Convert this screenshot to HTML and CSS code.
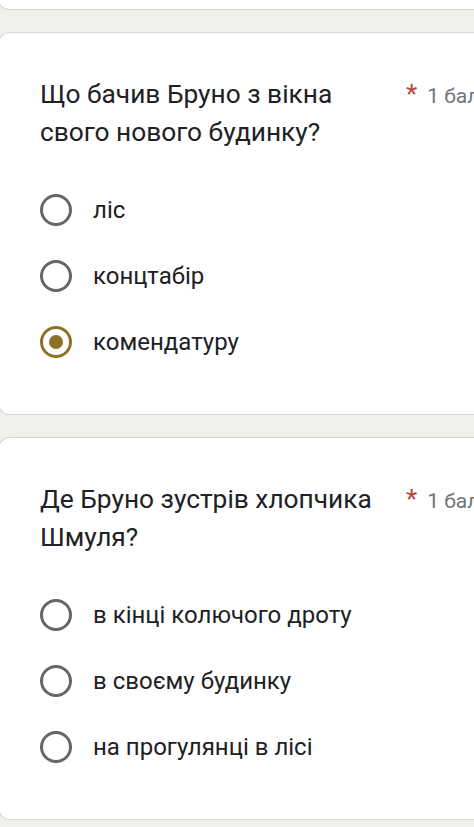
FILE: index.html
```html
<!DOCTYPE html>
<html lang="uk">
<head>
<meta charset="utf-8">
<link rel="stylesheet" href="styles.css">
</head>
<body>
<div class="page">
  <div class="card card-stub"></div>

  <div class="card">
    <div class="q-head">
      <div class="q-title">Що бачив Бруно з вікна свого нового будинку?</div>
      <div class="q-meta"><span class="req">*</span><span class="points">1 бал</span></div>
    </div>
    <div class="options">
      <label class="option"><span class="radio"></span><span class="opt-text">ліс</span></label>
      <label class="option"><span class="radio"></span><span class="opt-text">концтабір</span></label>
      <label class="option"><span class="radio checked"></span><span class="opt-text">комендатуру</span></label>
    </div>
  </div>

  <div class="card">
    <div class="q-head">
      <div class="q-title">Де Бруно зустрів хлопчика Шмуля?</div>
      <div class="q-meta"><span class="req">*</span><span class="points">1 бал</span></div>
    </div>
    <div class="options">
      <label class="option"><span class="radio"></span><span class="opt-text">в кінці колючого дроту</span></label>
      <label class="option"><span class="radio"></span><span class="opt-text">в своєму будинку</span></label>
      <label class="option"><span class="radio"></span><span class="opt-text">на прогулянці в лісі</span></label>
    </div>
  </div>
</div>
</body>
</html>
```

FILE: styles.css
```css
html, body {
  margin: 0;
  padding: 0;
}
body {
  background: #f2f0ed;
  overflow: hidden;
  font-family: Roboto, "Noto Sans", Arial, sans-serif;
  color: #202124;
}
.page {
  display: flex;
  flex-direction: column;
  gap: 22px;
  margin-left: -2px;
  width: 478px;
}
.card {
  background: #fff;
  border: 1px solid #d6d6d4;
  border-right: none;
  border-radius: 12px 0 0 12px;
  padding: 42px 0 39px 41px;
  overflow: hidden;
}
.card-stub {
  height: 10px;
  padding: 0;
  border-top: none;
  border-radius: 0 0 0 12px;
  margin-top: -1px;
}
.q-head {
  display: flex;
  align-items: flex-start;
}
.q-title {
  width: 350px;
  flex: none;
  font-size: 26.3px;
  line-height: 38px;
  color: #202124;
}
.q-meta {
  margin-left: 16px;
  display: flex;
  align-items: baseline;
  gap: 10px;
  line-height: 38px;
  white-space: nowrap;
  flex: none;
}
.req {
  color: #b8433c;
  font-size: 26px;
}
.points {
  color: #70757a;
  font-size: 21px;
}
.options {
  margin-top: 26px;
  display: flex;
  flex-direction: column;
}
.option {
  height: 66px;
  display: flex;
  align-items: center;
  gap: 21px;
}
.radio {
  width: 26px;
  height: 26px;
  border: 3px solid #666666;
  border-radius: 50%;
  display: flex;
  align-items: center;
  justify-content: center;
  flex: none;
}
.radio.checked {
  border-color: #8b7226;
}
.radio.checked::after {
  content: "";
  width: 14px;
  height: 14px;
  border-radius: 50%;
  background: #8b7226;
}
.opt-text {
  font-size: 24px;
  color: #202124;
}
```
